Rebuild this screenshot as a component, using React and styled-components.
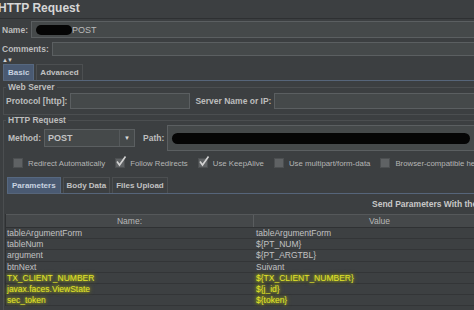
import React from "react";
import styled, { createGlobalStyle } from "styled-components";

const GlobalStyle = createGlobalStyle`
  html, body {
    margin: 0;
    padding: 0;
    background: #3c3f41;
    overflow: hidden;
  }
  body {
    font-family: "Liberation Sans", Arial, sans-serif;
    color: #bbbbbb;
  }
`;

const Page = styled.div`
  width: 560px;
  height: 310px;
  overflow: hidden;
  background: #3c3f41;
`;

const Title = styled.div`
  height: 18px;
  line-height: 17px;
  font-size: 12px;
  font-weight: bold;
  color: #d6d6d6;
  margin-left: -2px;
  border-bottom: 1px solid #2e3032;
`;

const FieldRow = styled.div`
  display: flex;
  align-items: center;
  gap: ${(p) => p.gap || 3}px;
  height: ${(p) => p.h || 18}px;
  padding: ${(p) => p.pad || "0 0 0 2px"};
`;

const Label = styled.span`
  font-size: 8.5px;
  font-weight: bold;
  color: #bdbdbd;
  white-space: nowrap;
`;

const TextField = styled.div`
  flex: ${(p) => (p.w ? "none" : 1)};
  width: ${(p) => (p.w ? `${p.w}px` : "auto")};
  height: ${(p) => p.h || 16}px;
  background: #45494a;
  border: 1px solid #5b5f61;
  box-sizing: border-box;
  display: flex;
  align-items: center;
  padding-left: 4px;
  font-size: 9px;
  color: #bbbbbb;
`;

const Redacted = styled.span`
  display: inline-block;
  width: ${(p) => p.w}px;
  height: ${(p) => p.h}px;
  background: #050505;
  border-radius: 6px;
`;

const Arrows = styled.div`
  font-size: 6px;
  line-height: 6px;
  height: 7px;
  padding-left: 2px;
  color: #d0d0d0;
  letter-spacing: -1px;
`;

const TabBar = styled.div`
  display: flex;
  align-items: flex-end;
  gap: 2px;
  height: ${(p) => p.h || 16}px;
  margin: ${(p) => p.m || "0"};
  border-bottom: 1px solid #56657a;
`;

const Tab = styled.div`
  height: 100%;
  box-sizing: border-box;
  padding: 0 ${(p) => (p.selected ? 4 : 3)}px;
  display: flex;
  align-items: center;
  font-size: 8px;
  font-weight: bold;
  color: ${(p) => (p.selected ? "#c8d2e0" : "#c2c2c2")};
  background: ${(p) => (p.selected ? "#4a5a72" : "#3c3f41")};
  border: 1px solid ${(p) => (p.selected ? "#566880" : "#4c4f51")};
  border-bottom: none;
`;

const Group = styled.fieldset`
  margin: ${(p) => p.m || "0 0 0 3px"};
  padding: 0 0 4px 2px;
  border: 1px solid #4b4e50;
  border-right: none;
  min-width: 0;
`;

const Legend = styled.legend`
  font-size: 8.5px;
  font-weight: bold;
  color: #bdbdbd;
  padding: 0 2px;
  margin-left: 0;
`;

const Combo = styled.div`
  width: 91px;
  height: 18px;
  box-sizing: border-box;
  display: flex;
  background: #45494a;
  border: 1px solid #5b5f61;
`;

const ComboText = styled.span`
  flex: 1;
  display: flex;
  align-items: center;
  padding-left: 3px;
  font-size: 9px;
  font-weight: bold;
  color: #c4c4c4;
`;

const ComboButton = styled.span`
  width: 14px;
  display: flex;
  align-items: center;
  justify-content: center;
  border-left: 1px solid #55595b;
  font-size: 6px;
  color: #dcdcdc;
`;

const CheckRow = styled.div`
  display: flex;
  align-items: center;
  height: 14px;
  margin-top: 5px;
  padding-left: 7px;
  gap: 10px;
`;

const CheckItem = styled.span`
  display: flex;
  align-items: center;
  gap: 5px;
  font-size: 7.8px;
  color: #b5b5b5;
  white-space: nowrap;
`;

const Box = styled.span`
  position: relative;
  width: 8px;
  height: 8px;
  background: #5f6264;
  border: 1px solid #4c4f51;
  svg {
    position: absolute;
    left: -1px;
    top: -4px;
  }
`;

const SendLabel = styled.div`
  height: 20px;
  display: flex;
  align-items: center;
  padding-left: 366px;
  font-size: 8.5px;
  font-weight: bold;
  color: #c8c8c8;
  white-space: nowrap;
`;

const Table = styled.div`
  width: 499px;
  margin-left: -1px;
  border-left: 1px solid #2f3133;
`;

const HeaderRow = styled.div`
  display: grid;
  grid-template-columns: 247px 252px;
  height: 12px;
  background: #45484a;
  border-top: 1px solid #55585a;
  border-bottom: 1px solid #2f3133;
`;

const HeaderCell = styled.div`
  display: flex;
  align-items: center;
  justify-content: center;
  font-size: 8.5px;
  color: #b8b8b8;
  border-left: ${(p) => (p.divider ? "1px solid #5a5d5f" : "none")};
`;

const Row = styled.div`
  display: grid;
  grid-template-columns: 247px 252px;
  height: 10.2px;
  border-bottom: 1px solid #333537;
  background: #3d4042;
`;

const Cell = styled.div`
  display: flex;
  align-items: center;
  padding-left: ${(p) => (p.value ? 3 : 1)}px;
  font-size: 8.5px;
  line-height: 10px;
  white-space: nowrap;
  color: ${(p) => (p.hl ? "#e0e32a" : "#c2c2c2")};
  text-shadow: ${(p) =>
    p.hl ? "0 0 3px rgba(190, 200, 20, 0.9), 0 0 5px rgba(170, 180, 10, 0.7)" : "none"};
`;

const Check = () => (
  <svg width="12" height="12" viewBox="0 0 12 12">
    <path d="M2 6.5 L4.5 10 L10.5 1.5" fill="none" stroke="#d2d2d2" strokeWidth="1.6" />
  </svg>
);

const params = [
  ["tableArgumentForm", "tableArgumentForm"],
  ["tableNum", "${PT_NUM}"],
  ["argument", "${PT_ARGTBL}"],
  ["btnNext", "Suivant"],
  ["TX_CLIENT_NUMBER", "${TX_CLIENT_NUMBER}", true],
  ["javax.faces.ViewState", "${j_id}", true],
  ["sec_token", "${token}", true],
];

const checks = [
  ["Redirect Automatically", false],
  ["Follow Redirects", true],
  ["Use KeepAlive", true],
  ["Use multipart/form-data", false],
  ["Browser-compatible headers", false],
];

export default function App() {
  return (
    <Page>
      <GlobalStyle />
      <Title>HTTP Request</Title>
      <FieldRow h={19} pad="1px 0 0 2px">
        <Label>Name:</Label>
        <TextField h={17}>
          <Redacted w={36} h={10} />
          <span>POST</span>
        </TextField>
      </FieldRow>
      <FieldRow h={16} pad="2px 0 0 2px">
        <Label>Comments:</Label>
        <TextField h={14} />
      </FieldRow>
      <Arrows>▲▼</Arrows>
      <TabBar h={16} m="0 0 0 3px">
        <Tab selected>Basic</Tab>
        <Tab>Advanced</Tab>
      </TabBar>
      <Group m="1px 0 0 3px">
        <Legend>Web Server</Legend>
        <FieldRow h={18} pad="0 0 0 0">
          <Label>Protocol [http]:</Label>
          <TextField w={120} />
          <Label style={{ marginLeft: 2 }}>Server Name or IP:</Label>
          <TextField />
        </FieldRow>
      </Group>
      <Group>
        <Legend>HTTP Request</Legend>
        <FieldRow h={26} pad="0 0 0 2px" gap={3}>
          <Label>Method:</Label>
          <Combo>
            <ComboText>POST</ComboText>
            <ComboButton>▼</ComboButton>
          </Combo>
          <Label style={{ marginLeft: 5 }}>Path:</Label>
          <TextField h={26}>
            <Redacted w={298} h={11} />
          </TextField>
        </FieldRow>
        <CheckRow>
          {checks.map(([label, on]) => (
            <CheckItem key={label}>
              <Box>{on && <Check />}</Box>
              {label}
            </CheckItem>
          ))}
        </CheckRow>
        <TabBar h={16} m="7px 0 0 1px">
          <Tab selected>Parameters</Tab>
          <Tab>Body Data</Tab>
          <Tab>Files Upload</Tab>
        </TabBar>
        <SendLabel>Send Parameters With the Request:</SendLabel>
        <Table>
          <HeaderRow>
            <HeaderCell>Name:</HeaderCell>
            <HeaderCell divider>Value</HeaderCell>
          </HeaderRow>
          {params.map(([name, value, hl]) => (
            <Row key={name}>
              <Cell hl={hl}>{name}</Cell>
              <Cell value hl={hl}>{value}</Cell>
            </Row>
          ))}
        </Table>
      </Group>
    </Page>
  );
}
